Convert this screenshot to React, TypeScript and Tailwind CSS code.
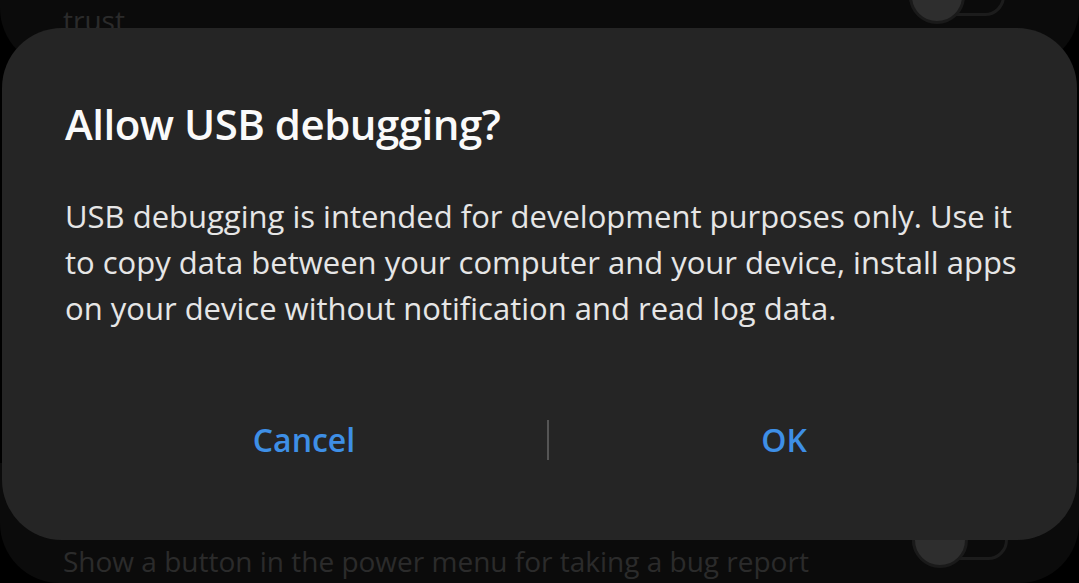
import React from "react";

function Toggle({ className }: { className?: string }) {
  return (
    <div className={"relative w-[96px] h-[40px] " + (className ?? "")}>
      <div className="absolute inset-0 rounded-full border-[3px] border-[#1c1c1c]" />
      <div className="absolute left-0 top-[-8px] w-[56px] h-[56px] rounded-full bg-[#2e2e2e] border-[3px] border-[#1a1a1a]" />
    </div>
  );
}

export default function App() {
  return (
    <div className="relative w-[1079px] h-[583px] bg-black overflow-hidden font-['Open_Sans',sans-serif]">
      <div className="flex flex-col justify-between h-full">
        {/* top settings card */}
        <div className="h-[68px] bg-[#0b0b0b] rounded-b-[60px] overflow-hidden flex flex-col justify-end pb-[28px]">
          <div className="flex items-end pl-[63px] pr-[74px]">
            <div className="flex-1 text-[28px] leading-[40px] text-[#2b2b2b]">
              <div className="whitespace-nowrap">Automatically lock the screen when the last trust agent loses</div>
              <div>trust</div>
            </div>
            <Toggle className="mb-[24px]" />
          </div>
        </div>
        {/* bottom settings card */}
        <div className="h-[120px] bg-[#0b0b0b] rounded-b-[60px] overflow-hidden flex flex-col justify-end pb-[2px]">
          <div className="flex items-end pl-[63px] pr-[71px]">
            <div className="flex-1 text-[28px] leading-[40px] text-[#2b2b2b]">
              <div className="whitespace-nowrap">Bug report shortcut</div>
              <div className="whitespace-nowrap">Show a button in the power menu for taking a bug report</div>
            </div>
            <Toggle className="mb-[21px]" />
          </div>
        </div>
      </div>

      {/* dialog */}
      <div className="absolute left-[2px] top-[28px] w-[1075px] h-[512px] rounded-[60px] bg-[#252525] flex flex-col">
        <div className="pl-[63px] pt-[66px] text-[42px] leading-[60px] font-semibold text-[#fafafa] tracking-[-0.5px]">
          Allow USB debugging?
        </div>
        <div className="pl-[63px] pt-[39px] text-[31px] leading-[46px] text-[#e6e6e6]">
          <div className="whitespace-nowrap">USB debugging is intended for development purposes only. Use it</div>
          <div className="whitespace-nowrap">to copy data between your computer and your device, install apps</div>
          <div className="whitespace-nowrap">on your device without notification and read log data.</div>
        </div>
        <div className="flex items-center pl-[59px] mt-[85px]">
          <div className="w-[486px] text-center text-[32px] font-semibold text-[#3e8fe6]">Cancel</div>
          <div className="w-[2px] h-[40px] bg-[#555555]" />
          <div className="w-[470px] text-center text-[32px] font-semibold text-[#3e8fe6]">OK</div>
        </div>
      </div>
    </div>
  );
}
